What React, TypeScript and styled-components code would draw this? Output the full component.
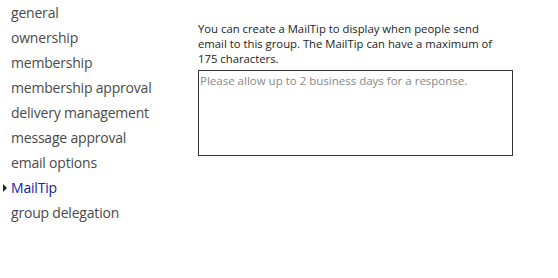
import React from "react";
import styled, { createGlobalStyle } from "styled-components";

const Global = createGlobalStyle`
  html, body { margin: 0; padding: 0; background: #fff; }
  body { font-family: "Open Sans", "Noto Sans", sans-serif; }
`;

const Page = styled.div`
  display: flex;
  width: 558px;
  height: 278px;
  background: #fff;
`;

const Nav = styled.ul`
  list-style: none;
  margin: 0;
  padding: 2px 0 0 0;
  width: 198px;
  display: flex;
  flex-direction: column;
`;

const NavItem = styled.li<{ $active?: boolean }>`
  position: relative;
  height: 25px;
  line-height: 22px;
  padding-left: 11px;
  font-size: 14px;
  letter-spacing: -0.2px;
  color: ${(p) => (p.$active ? "#2020a4" : "#4a4a4a")};
  white-space: nowrap;
`;

const Arrow = styled.span`
  position: absolute;
  left: 3px;
  top: 7px;
  width: 0;
  height: 0;
  border-top: 4px solid transparent;
  border-bottom: 4px solid transparent;
  border-left: 4px solid #222;
`;

const Content = styled.div`
  display: flex;
  flex-direction: column;
  padding-top: 21px;
`;

const Desc = styled.p`
  margin: 0 0 4px 0;
  width: 305px;
  font-size: 11.3px;
  line-height: 15px;
  color: #222;
`;

const Area = styled.textarea`
  box-sizing: border-box;
  width: 315px;
  height: 86px;
  margin: 0;
  padding: 2px 1px;
  border: 1px solid #333;
  border-radius: 0;
  resize: none;
  font-family: "Open Sans", "Noto Sans", sans-serif;
  font-size: 11.5px;
  line-height: 15px;
  color: #222;
  &::placeholder { color: #888; }
`;

const items = [
  "general",
  "ownership",
  "membership",
  "membership approval",
  "delivery management",
  "message approval",
  "email options",
  "MailTip",
  "group delegation",
];

export default function App() {
  return (
    <>
      <Global />
      <Page>
        <Nav>
          {items.map((it) => (
            <NavItem key={it} $active={it === "MailTip"}>
              {it === "MailTip" && <Arrow />}
              {it}
            </NavItem>
          ))}
        </Nav>
        <Content>
          <Desc>
            You can create a MailTip to display when people send email to this
            group. The MailTip can have a maximum of 175 characters.
          </Desc>
          <Area placeholder="Please allow up to 2 business days for a response." />
        </Content>
      </Page>
    </>
  );
}
